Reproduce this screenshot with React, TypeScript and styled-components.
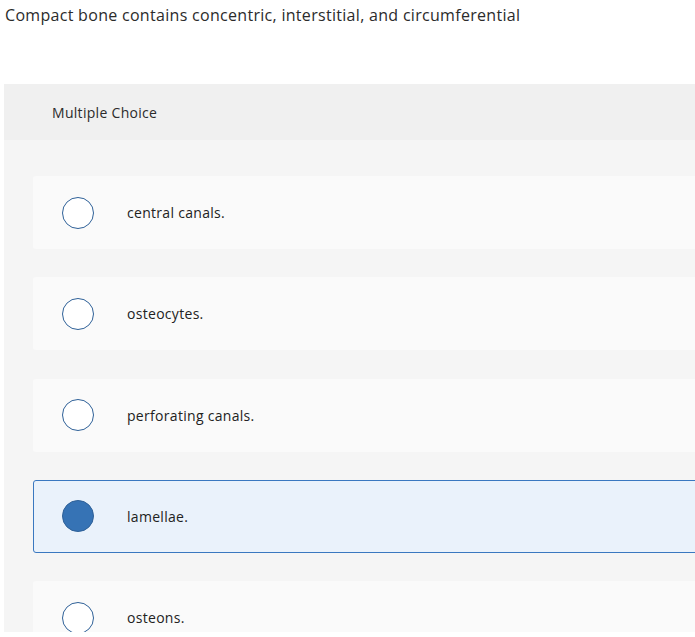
import React, { useState } from 'react'
import styled, { createGlobalStyle } from 'styled-components'

const GlobalStyle = createGlobalStyle`
  html, body {
    margin: 0;
    padding: 0;
    background: #ffffff;
    overflow: hidden;
  }
  body {
    font-family: 'Open Sans', 'Liberation Sans', Arial, sans-serif;
    color: #333333;
  }
`

const Page = styled.div`
  height: 632px;
  overflow: hidden;
  padding-left: 4px;
`

const Prompt = styled.p`
  margin: 0;
  padding: 4px 0 0 1px;
  font-size: 16px;
  line-height: 22px;
  letter-spacing: 0.3px;
  color: #2b2b2b;
  white-space: nowrap;
`

const Panel = styled.section`
  margin-top: 58px;
  width: 760px;
  background: #f5f5f5;
  min-height: 600px;
`

const PanelHeader = styled.header`
  display: flex;
  align-items: center;
  height: 56px;
  padding-left: 48px;
  background: #f0f0f0;
  font-size: 14px;
  letter-spacing: 0.3px;
  color: #2b2b2b;
`

const ChoiceList = styled.div`
  display: flex;
  flex-direction: column;
  gap: 28.25px;
  padding: 36px 0 0 29px;
`

const Choice = styled.label<{ $selected: boolean }>`
  display: flex;
  align-items: center;
  height: 73px;
  box-sizing: border-box;
  padding-left: 28px;
  border-radius: 3px;
  background: ${({ $selected }) => ($selected ? '#eaf2fb' : '#fafafa')};
  border: 1px solid ${({ $selected }) => ($selected ? '#3a78c0' : 'transparent')};
  cursor: pointer;
`

const Radio = styled.span<{ $selected: boolean }>`
  flex: none;
  width: 32px;
  height: 32px;
  box-sizing: border-box;
  border-radius: 50%;
  border: 1.5px solid #2f6198;
  background: ${({ $selected }) => ($selected ? '#3673b5' : '#ffffff')};
`

const ChoiceText = styled.span`
  margin-left: 33px;
  font-size: 14px;
  letter-spacing: 0.3px;
  color: #222222;
`

const choices = ['central canals.', 'osteocytes.', 'perforating canals.', 'lamellae.', 'osteons.']

const App: React.FC = () => {
  const [selected, setSelected] = useState(3)

  return (
    <Page>
      <GlobalStyle />
      <Prompt>Compact bone contains concentric, interstitial, and circumferential</Prompt>
      <Panel>
        <PanelHeader>Multiple Choice</PanelHeader>
        <ChoiceList>
          {choices.map((c, i) => (
            <Choice key={c} $selected={i === selected} onClick={() => setSelected(i)}>
              <Radio $selected={i === selected} />
              <ChoiceText>{c}</ChoiceText>
            </Choice>
          ))}
        </ChoiceList>
      </Panel>
    </Page>
  )
}

export default App
